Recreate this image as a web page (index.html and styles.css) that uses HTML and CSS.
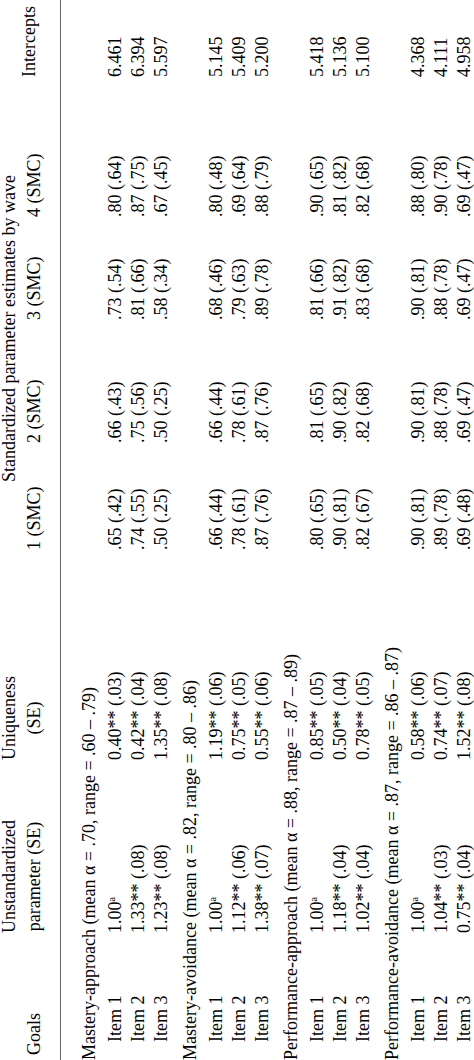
FILE: index.html
```html
<!DOCTYPE html>
<html lang="en">
<head>
<meta charset="utf-8">
<title>Table</title>
<link rel="stylesheet" href="styles.css">
</head>
<body>
<div class="stage">
<table class="tbl">
  <colgroup>
    <col class="c-goal"><col class="c-unstd"><col class="c-uniq"><col class="c-w1"><col class="c-w2"><col class="c-w3"><col class="c-w4"><col class="c-int">
  </colgroup>
  <thead>
    <tr class="h1">
      <th rowspan="2" class="h-goals">Goals</th>
      <th rowspan="2" class="h-two"><span class="stack">Unstandardized<br>parameter (SE)</span></th>
      <th rowspan="2" class="h-two"><span class="stack">Uniqueness<br>(SE)</span></th>
      <th colspan="4" class="h-span">Standardized parameter estimates by wave</th>
      <th rowspan="2" class="h-int">Intercepts</th>
    </tr>
    <tr class="h2">
      <th>1 (SMC)</th><th>2 (SMC)</th><th>3 (SMC)</th><th>4 (SMC)</th>
    </tr>
  </thead>
  <tbody>
    <tr class="grp first"><td colspan="8">Mastery-approach (mean α = .70, range = .60 – .79)</td></tr>
    <tr class="item"><td>Item 1</td><td>1.00<sup>a</sup></td><td>0.40** (.03)</td><td>.65 (.42)</td><td>.66 (.43)</td><td>.73 (.54)</td><td>.80 (.64)</td><td>6.461</td></tr>
    <tr class="item"><td>Item 2</td><td>1.33** (.08)</td><td>0.42** (.04)</td><td>.74 (.55)</td><td>.75 (.56)</td><td>.81 (.66)</td><td>.87 (.75)</td><td>6.394</td></tr>
    <tr class="item"><td>Item 3</td><td>1.23** (.08)</td><td>1.35** (.08)</td><td>.50 (.25)</td><td>.50 (.25)</td><td>.58 (.34)</td><td>.67 (.45)</td><td>5.597</td></tr>

    <tr class="grp"><td colspan="8">Mastery-avoidance (mean α = .82, range = .80 – .86)</td></tr>
    <tr class="item"><td>Item 1</td><td>1.00<sup>a</sup></td><td>1.19** (.06)</td><td>.66 (.44)</td><td>.66 (.44)</td><td>.68 (.46)</td><td>.80 (.48)</td><td>5.145</td></tr>
    <tr class="item"><td>Item 2</td><td>1.12** (.06)</td><td>0.75** (.05)</td><td>.78 (.61)</td><td>.78 (.61)</td><td>.79 (.63)</td><td>.69 (.64)</td><td>5.409</td></tr>
    <tr class="item"><td>Item 3</td><td>1.38** (.07)</td><td>0.55** (.06)</td><td>.87 (.76)</td><td>.87 (.76)</td><td>.89 (.78)</td><td>.88 (.79)</td><td>5.200</td></tr>

    <tr class="grp"><td colspan="8">Performance-approach (mean α = .88, range = .87 – .89)</td></tr>
    <tr class="item"><td>Item 1</td><td>1.00<sup>a</sup></td><td>0.85** (.05)</td><td>.80 (.65)</td><td>.81 (.65)</td><td>.81 (.66)</td><td>.90 (.65)</td><td>5.418</td></tr>
    <tr class="item"><td>Item 2</td><td>1.18** (.04)</td><td>0.50** (.04)</td><td>.90 (.81)</td><td>.90 (.82)</td><td>.91 (.82)</td><td>.81 (.82)</td><td>5.136</td></tr>
    <tr class="item"><td>Item 3</td><td>1.02** (.04)</td><td>0.78** (.05)</td><td>.82 (.67)</td><td>.82 (.68)</td><td>.83 (.68)</td><td>.82 (.68)</td><td>5.100</td></tr>

    <tr class="grp"><td colspan="8">Performance-avoidance (mean α = .87, range = .86 – .87)</td></tr>
    <tr class="item"><td>Item 1</td><td>1.00<sup>a</sup></td><td>0.58** (.06)</td><td>.90 (.81)</td><td>.90 (.81)</td><td>.90 (.81)</td><td>.88 (.80)</td><td>4.368</td></tr>
    <tr class="item"><td>Item 2</td><td>1.04** (.03)</td><td>0.74** (.07)</td><td>.89 (.78)</td><td>.88 (.78)</td><td>.88 (.78)</td><td>.90 (.78)</td><td>4.111</td></tr>
    <tr class="item"><td>Item 3</td><td>0.75** (.04)</td><td>1.52** (.08)</td><td>.69 (.48)</td><td>.69 (.47)</td><td>.69 (.47)</td><td>.69 (.47)</td><td>4.958</td></tr>
  </tbody>
</table>
</div>
</body>
</html>
```

FILE: styles.css
```css
html, body {
  margin: 0;
  padding: 0;
  background: #ffffff;
  overflow: hidden;
}

body {
  width: 474px;
  height: 1060px;
}

.stage {
  width: 1060px;
  height: 474px;
  transform-origin: 0 0;
  transform: translate(-3px, 1060px) rotate(-90deg);
}

.tbl {
  border-collapse: collapse;
  table-layout: fixed;
  width: 1060px;
  font-family: "Liberation Serif", "Times New Roman", serif;
  font-size: 18px;
  color: #000000;
}

.c-goal { width: 127px; }
.c-unstd { width: 173px; }
.c-uniq { width: 210px; }
.c-w1 { width: 107px; }
.c-w2 { width: 123px; }
.c-w3 { width: 103px; }
.c-w4 { width: 140px; }
.c-int { width: 77px; }

.tbl th,
.tbl td {
  padding: 0;
  font-weight: normal;
  text-align: left;
  white-space: nowrap;
  vertical-align: top;
}

.tbl thead th {
  line-height: 25px;
}

.tbl thead .h2 th,
.tbl thead th[rowspan] {
  padding-bottom: 13px;
  border-bottom: 1px solid #666666;
}

.h-goals {
  padding-top: 25px !important;
  padding-left: 5px !important;
}

.stack {
  display: inline-block;
  text-align: center;
}

.h-span {
  padding-left: 68px !important;
}

.h-int {
  padding-top: 20px !important;
}

.tbl tbody td {
  line-height: 23px;
}

.grp td {
  padding-top: 6px;
  padding-bottom: 3px;
}

.grp.first td {
  padding-top: 17px;
}

.item td:first-child {
  padding-left: 18px;
}

sup {
  font-size: 10px;
  line-height: 0;
  vertical-align: 6px;
}
```
